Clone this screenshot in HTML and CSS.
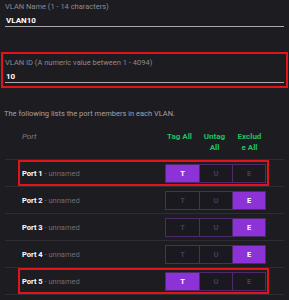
FILE: index.html
```html
<!DOCTYPE html>
<html lang="en">
<head>
    <meta charset="UTF-8">
    <meta name="viewport" content="width=device-width, initial-scale=1.0">
    <title>VLAN Settings</title>
    <link rel="stylesheet" href="styles.css">
</head>
<body>
    <div class="vlan-page">
        <!-- VLAN Name -->
        <div class="field">
            <div class="field-label">VLAN Name (1 - 14 characters)</div>
            <div class="field-input">VLAN10</div>
        </div>

        <!-- VLAN ID -->
        <div class="field-mark">
            <div class="field">
                <div class="field-label">VLAN ID (A numeric value between 1 - 4094)</div>
                <div class="field-input">10</div>
            </div>
        </div>

        <p class="intro">The following lists the port members in each VLAN.</p>

        <!-- Port Members -->
        <div class="port-table">
            <div class="port-head">
                <div class="head-port">Port</div>
                <div class="head-cols">
                    <div class="head-col">Tag All</div>
                    <div class="head-col">Untag All</div>
                    <div class="head-col">Exclud e All</div>
                </div>
            </div>

            <div class="port-row">
                <div class="port-box marked">
                    <div class="port-name"><b>Port 1</b> - <span>unnamed</span></div>
                    <div class="toggle">
                        <div class="toggle-btn on">T</div>
                        <div class="toggle-btn">U</div>
                        <div class="toggle-btn">E</div>
                    </div>
                </div>
            </div>

            <div class="port-row">
                <div class="port-box">
                    <div class="port-name"><b>Port 2</b> - <span>unnamed</span></div>
                    <div class="toggle">
                        <div class="toggle-btn">T</div>
                        <div class="toggle-btn">U</div>
                        <div class="toggle-btn on">E</div>
                    </div>
                </div>
            </div>

            <div class="port-row">
                <div class="port-box">
                    <div class="port-name"><b>Port 3</b> - <span>unnamed</span></div>
                    <div class="toggle">
                        <div class="toggle-btn">T</div>
                        <div class="toggle-btn">U</div>
                        <div class="toggle-btn on">E</div>
                    </div>
                </div>
            </div>

            <div class="port-row">
                <div class="port-box">
                    <div class="port-name"><b>Port 4</b> - <span>unnamed</span></div>
                    <div class="toggle">
                        <div class="toggle-btn">T</div>
                        <div class="toggle-btn">U</div>
                        <div class="toggle-btn on">E</div>
                    </div>
                </div>
            </div>

            <div class="port-row">
                <div class="port-box marked">
                    <div class="port-name"><b>Port 5</b> - <span>unnamed</span></div>
                    <div class="toggle">
                        <div class="toggle-btn on">T</div>
                        <div class="toggle-btn">U</div>
                        <div class="toggle-btn">E</div>
                    </div>
                </div>
            </div>
        </div>
    </div>
</body>
</html>
```

FILE: styles.css
```css
/* Base */
* {
    margin: 0;
    padding: 0;
    box-sizing: border-box;
    font-family: Roboto, 'Noto Sans', sans-serif;
}

body {
    background: #1d1c21;
    color: #fff;
}

.vlan-page {
    padding-top: 2px;
}

/* Fields */
.field {
    padding: 0 5px;
}

.field-label {
    font-size: 7.5px;
    line-height: 9px;
    color: #8c8b91;
}

.field-input {
    font-size: 8px;
    font-weight: 700;
    line-height: 10px;
    padding: 5px 1px 0;
    border-bottom: 1px solid #a9a8ad;
}

.field-mark {
    margin: 25px 1px 0;
    border: 2px solid #e0141a;
    padding: 4px 2px 3px;
}

.field-mark .field {
    padding: 0;
}

.intro {
    margin: 21px 4px 0;
    font-size: 7.5px;
    line-height: 10px;
    color: #a3a2a8;
}

/* Port table */
.port-table {
    margin: 12px 5px 0;
}

.port-head {
    display: flex;
    justify-content: space-between;
    padding: 0 17px 0 17px;
    height: 29px;
    border-bottom: 1px solid #2e2d33;
}

.head-port {
    font-size: 8px;
    font-style: italic;
    color: #7d7c83;
    line-height: 11px;
}

.head-cols {
    display: flex;
}

.head-col {
    width: 35px;
    padding: 0 4px;
    text-align: center;
    font-size: 8px;
    font-weight: 700;
    line-height: 11px;
    color: #1fc262;
}

.port-row {
    padding: 0 15px 0 13px;
    border-bottom: 1px solid #2e2d33;
}

.port-box {
    display: flex;
    align-items: center;
    justify-content: space-between;
    height: 26px;
    padding: 0 1px 0 2px;
    border: 2px solid transparent;
}

.port-box.marked {
    border-color: #e0141a;
}

.port-name {
    font-size: 7.5px;
    color: #6f6e75;
}

.port-name b {
    color: #fff;
    font-weight: 700;
}

/* T / U / E toggle */
.toggle {
    display: flex;
    border: 1px solid #4d2a6c;
}

.toggle-btn {
    width: 33px;
    height: 17px;
    display: flex;
    align-items: center;
    justify-content: center;
    font-size: 7.5px;
    font-weight: 700;
    color: #4a3b5a;
    background: #1a1920;
    border-left: 1px solid #4d2a6c;
}

.toggle-btn:first-child {
    border-left: none;
}

.toggle-btn.on {
    background: #8d32d6;
    color: #fff;
}
```
